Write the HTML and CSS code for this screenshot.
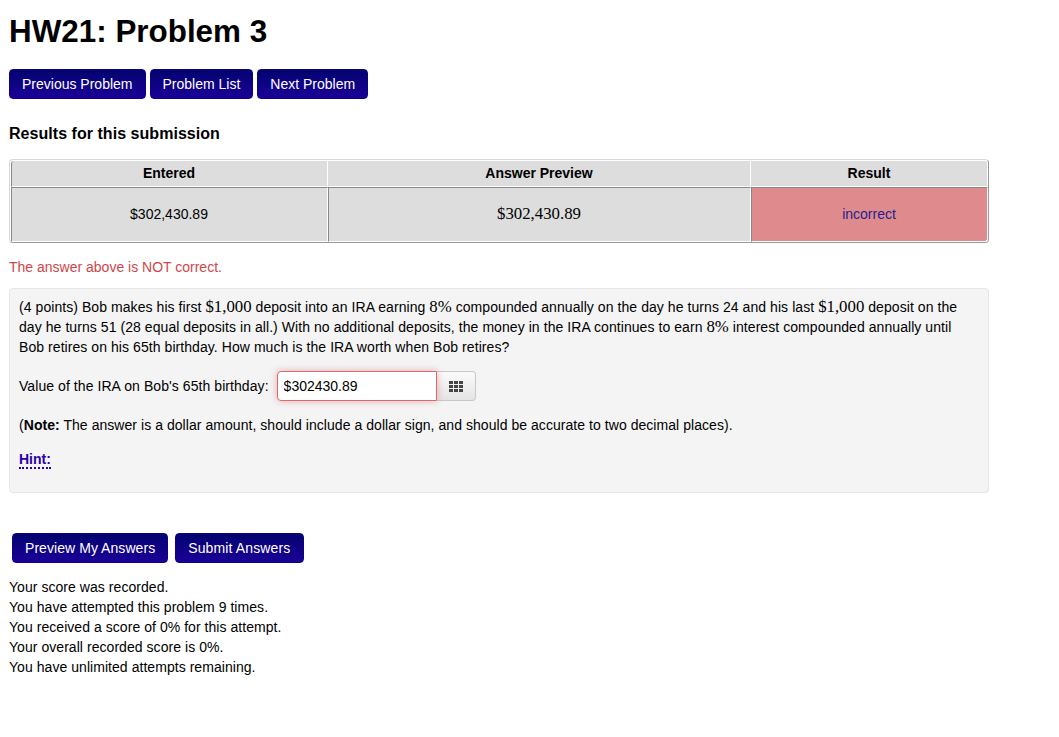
FILE: index.html
```html
<!DOCTYPE html>
<html lang="en">
<head>
<meta charset="utf-8">
<title>HW21: Problem 3</title>
<link rel="stylesheet" href="styles.css">
</head>
<body>
<h1 class="title">HW21: Problem 3</h1>
<nav class="nav-row">
  <a class="btn" href="#">Previous Problem</a>
  <a class="btn" href="#">Problem List</a>
  <a class="btn" href="#">Next Problem</a>
</nav>
<h2 class="subtitle">Results for this submission</h2>
<table class="results">
  <colgroup><col class="col-a"><col class="col-b"><col class="col-c"></colgroup>
  <thead>
    <tr><th>Entered</th><th>Answer Preview</th><th class="last-head">Result</th></tr>
  </thead>
  <tbody>
    <tr>
      <td>$302,430.89</td>
      <td class="preview">$302,430.89</td>
      <td class="incorrect">incorrect</td>
    </tr>
  </tbody>
</table>
<p class="warning">The answer above is NOT correct.</p>
<section class="problem">
  <p class="statement">(4 points) Bob makes his first <span class="math">$1,000</span> deposit into an IRA earning <span class="math">8%</span> compounded annually on the day he turns 24 and his last <span class="math">$1,000</span> deposit on the day he turns 51 (28 equal deposits in all.) With no additional deposits, the money in the IRA continues to earn <span class="math">8%</span> interest compounded annually until Bob retires on his 65th birthday. How much is the IRA worth when Bob retires?</p>
  <div class="answer-row">
    <label class="answer-label" for="answer">Value of the IRA on Bob's 65th birthday:</label>
    <input class="answer-input" id="answer" type="text" value="$302430.89">
    <button class="addon" type="button" aria-label="Equation editor">
      <svg width="14" height="11" viewBox="0 0 14 11" aria-hidden="true">
        <g fill="#444">
          <rect x="0" y="0" width="4" height="3"/><rect x="5" y="0" width="4" height="3"/><rect x="10" y="0" width="4" height="3"/>
          <rect x="0" y="4" width="4" height="3"/><rect x="5" y="4" width="4" height="3"/><rect x="10" y="4" width="4" height="3"/>
          <rect x="0" y="8" width="4" height="3"/><rect x="5" y="8" width="4" height="3"/><rect x="10" y="8" width="4" height="3"/>
        </g>
      </svg>
    </button>
  </div>
  <p class="note">(<b>Note:</b> The answer is a dollar amount, should include a dollar sign, and should be accurate to two decimal places).</p>
  <p class="hint"><a class="hint-link" href="#">Hint:</a></p>
</section>
<div class="submit-row">
  <a class="btn btn-wide" href="#">Preview My Answers</a>
  <a class="btn btn-submit" href="#">Submit Answers</a>
</div>
<div class="score">
  <div>Your score was recorded.</div>
  <div>You have attempted this problem 9 times.</div>
  <div>You received a score of 0% for this attempt.</div>
  <div>Your overall recorded score is 0%.</div>
  <div>You have unlimited attempts remaining.</div>
</div>
</body>
</html>
```
FILE: styles.css
```css
* { box-sizing: border-box; }
html, body { margin: 0; padding: 0; background: #fff; }
body {
  width: 1059px;
  min-height: 737px;
  padding: 0 0 0 9px;
  font-family: "Liberation Sans", Arial, sans-serif;
  font-size: 14px;
  line-height: 20px;
  color: #000;
  overflow: hidden;
}
.title {
  margin: 0;
  padding-top: 12px;
  font-size: 31.4px;
  line-height: 40px;
  font-weight: bold;
}
.nav-row {
  display: flex;
  gap: 4px;
  margin-top: 17px;
}
.btn {
  display: block;
  height: 30px;
  padding: 0 12px;
  line-height: 29px;
  font-size: 14px;
  color: #fff;
  text-decoration: none;
  white-space: nowrap;
  border: 1px solid #0c0580;
  border-radius: 4px;
  background: linear-gradient(#03036f, #1a0098);
}
.btn-wide { letter-spacing: .06px; }
.btn-submit { padding-right: 13px; letter-spacing: .12px; }
.subtitle {
  margin: 25px 0 0;
  font-size: 16px;
  line-height: 20px;
  font-weight: bold;
  letter-spacing: .04px;
}
.results {
  width: 980px;
  height: 84px;
  margin-top: 15px;
  table-layout: fixed;
  border-collapse: separate;
  border-spacing: 0;
  border: 1px solid #d8d8d8;
  border-right-color: #999;
  border-bottom-color: #999;
  border-radius: 4px;
  padding: 1px 0 0 1px;
}
.col-a { width: 317px; }
.col-b { width: 423px; }
.col-c { width: 237px; }
.results th, .results td {
  text-align: center;
  background: #ddd;
  border-style: solid;
  border-width: 0 1px 1px 1px;
  border-color: #fff;
  border-left-color: #ddd;
}
.results th {
  height: 26px;
  padding: 0 1px 2px 0;
  font-weight: bold;
}
.results th:first-child { border-left-color: #888; border-top-left-radius: 3px; }
.results th.last-head { border-top-right-radius: 3px; }
.results td {
  height: 55px;
  padding: 0 1px 1px 0;
  border-top: 1px solid #888;
  border-left-color: #888;
}
.results td.preview {
  font-family: "Liberation Serif", "Times New Roman", serif;
  font-size: 16.8px;
}
.results td.incorrect {
  background: #df8a8c;
  color: #1f1f90;
  border-bottom-right-radius: 3px;
}
.warning {
  margin: 14px 0 0;
  color: #d0464a;
}
.problem {
  width: 980px;
  height: 205px;
  margin-top: 11px;
  padding: 8px 9px 9px;
  background: #f4f4f4;
  border: 1px solid #e6e6e6;
  border-radius: 4px;
}
.statement { margin: 0; padding-right: 6px; letter-spacing: .065px; }
.math {
  font-family: "Liberation Serif", "Times New Roman", serif;
  font-size: 16.8px;
  letter-spacing: 0;
}
.answer-row {
  display: flex;
  align-items: center;
  margin-top: 14px;
}
.answer-label { margin-right: 8px; letter-spacing: .07px; }
.answer-input {
  position: relative;
  z-index: 1;
  width: 160px;
  height: 30px;
  padding: 0 6px;
  font: 14px/20px "Liberation Sans", Arial, sans-serif;
  color: #000;
  background: #fff;
  border: 1px solid #e0686c;
  border-radius: 4px 0 0 4px;
  box-shadow: 0 0 7px rgba(200, 70, 70, .4);
  outline: none;
}
.addon {
  display: flex;
  align-items: center;
  justify-content: center;
  width: 39px;
  height: 30px;
  padding: 0;
  border: 1px solid #c8c8c8;
  border-left: 0;
  border-radius: 0 4px 4px 0;
  background: linear-gradient(#fbfbfb, #e4e4e4);
}
.note { margin: 14px 0 0; letter-spacing: .05px; }
.hint { margin: 14px 0 0; }
.hint-link {
  color: #2a00b0;
  font-weight: bold;
  text-decoration: none;
  border-bottom: 2px dotted #2a00b0;
}
.submit-row {
  display: flex;
  gap: 7px;
  margin-top: 40px;
  padding-left: 3px;
}
.score { margin-top: 14px; letter-spacing: .05px; }
```
